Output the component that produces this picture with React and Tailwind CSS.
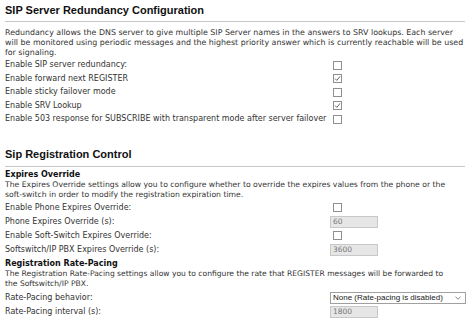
import React from "react";

function Check({ checked }) {
  return (
    <span className="ml-[3px] inline-flex w-[9px] h-[9px] border border-[#8f8f8f] bg-white items-center justify-center">
      {checked && (
        <svg width="7" height="7" viewBox="0 0 7 7">
          <path d="M1 3.6 L2.8 5.4 L6 1.4" fill="none" stroke="#555" strokeWidth="0.9" />
        </svg>
      )}
    </span>
  );
}

function Field({ value }) {
  return (
    <span className="inline-flex w-[48px] h-[12px] border border-[#c8c8c8] bg-[#e6e6e6] items-center pl-[2px] text-[7.5px] text-[#777]">
      {value}
    </span>
  );
}

function Row({ label, children }) {
  return (
    <div className="flex items-center h-[14px]">
      <div className="w-[325px] shrink-0 whitespace-nowrap">{label}</div>
      <div className="flex items-center">{children}</div>
    </div>
  );
}

function RowS({ label, children }) {
  return (
    <div className="flex items-center h-[13.5px]">
      <div className="w-[325px] shrink-0 whitespace-nowrap">{label}</div>
      <div className="flex items-center">{children}</div>
    </div>
  );
}

export default function App() {
  return (
    <div className="w-[474px] h-[327px] overflow-hidden bg-white pl-[5px] text-[8px] text-[#333] font-['DejaVu_Sans',sans-serif]">
      <div className="mt-[2px] leading-[16px] text-[11px] font-bold text-[#111] font-['Liberation_Sans',sans-serif]">
        SIP Server Redundancy Configuration
      </div>
      <div className="mt-[3px] h-px w-[460px] bg-[#c8c8c8]" />
      <p className="mt-[6px] leading-[10px] whitespace-nowrap text-[7.9px]">
        Redundancy allows the DNS server to give multiple SIP Server names in the answers to SRV lookups. Each server
        <br />
        will be monitored using periodic messages and the highest priority answer which is currently reachable will be used
        <br />
        for signaling.
      </p>
      <div className="mt-[0.5px]">
        <RowS label="Enable SIP server redundancy:"><Check /></RowS>
        <RowS label="Enable forward next REGISTER"><Check checked /></RowS>
        <RowS label="Enable sticky failover mode"><Check /></RowS>
        <RowS label="Enable SRV Lookup"><Check checked /></RowS>
        <RowS label="Enable 503 response for SUBSCRIBE with transparent mode after server failover"><Check /></RowS>
      </div>
      <div className="mt-[19.5px] leading-[16px] text-[11px] font-bold text-[#111] font-['Liberation_Sans',sans-serif]">
        Sip Registration Control
      </div>
      <div className="mt-[4px] h-px w-[460px] bg-[#c8c8c8]" />
      <div className="mt-[3px] leading-[10px] font-bold text-[#111]">Expires Override</div>
      <p className="leading-[10px] whitespace-nowrap text-[7.7px]">
        The Expires Override settings allow you to configure whether to override the expires values from the phone or the
        <br />
        soft-switch in order to modify the registration expiration time.
      </p>
      <div className="mt-[1px]">
        <Row label="Enable Phone Expires Override:"><Check /></Row>
        <Row label="Phone Expires Override (s):"><Field value="60" /></Row>
        <Row label="Enable Soft-Switch Expires Override:"><Check /></Row>
        <Row label="Softswitch/IP PBX Expires Override (s):"><Field value="3600" /></Row>
      </div>
      <div className="mt-[2px] leading-[10px] font-bold text-[#111]">Registration Rate-Pacing</div>
      <p className="leading-[10px] whitespace-nowrap text-[7.6px]">
        The Registration Rate-Pacing settings allow you to configure the rate that REGISTER messages will be forwarded to
        <br />
        the Softswitch/IP PBX.
      </p>
      <div className="mt-[2px]">
        <Row label="Rate-Pacing behavior:">
          <span className="inline-flex w-[136px] h-[12px] border border-[#a0a0a0] bg-white items-center justify-between pl-[2px] pr-[4px] text-[8px] text-[#222] font-['Liberation_Sans',sans-serif]">
            <span>None (Rate-pacing is disabled)</span>
            <svg width="6" height="4" viewBox="0 0 6 4">
              <path d="M0.5 0.8 L3 3.2 L5.5 0.8" fill="none" stroke="#666" strokeWidth="0.8" />
            </svg>
          </span>
        </Row>
        <Row label="Rate-Pacing interval (s):"><Field value="1800" /></Row>
      </div>
    </div>
  );
}
